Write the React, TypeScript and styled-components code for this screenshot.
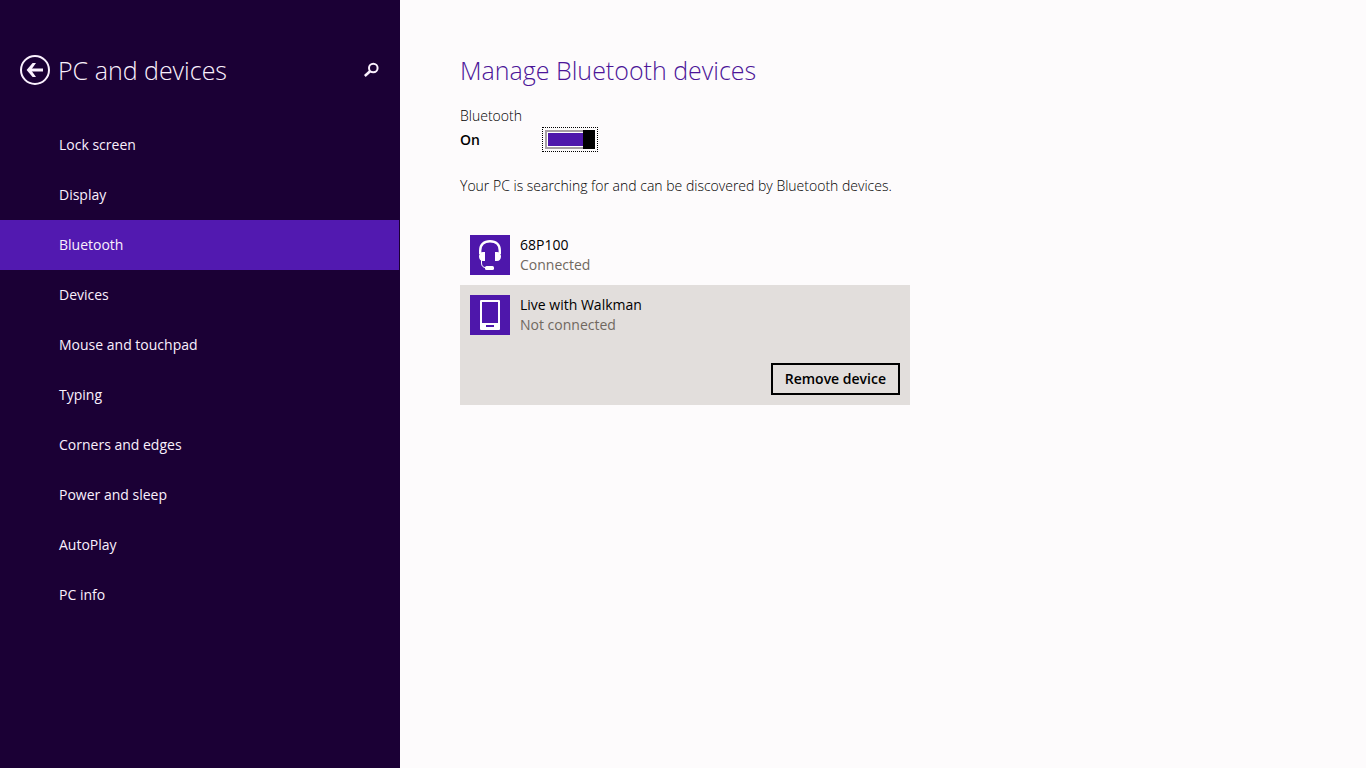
import React, { useState } from "react";
import styled, { createGlobalStyle } from "styled-components";

const GlobalStyle = createGlobalStyle`
  *, *::before, *::after { box-sizing: border-box; }
  body {
    margin: 0;
    background: #fdfbfc;
    color: #000;
    font: 14px/20px "Open Sans", "Noto Sans", sans-serif;
  }
  button, input { font: inherit; color: inherit; }
`;

const Page = styled.div`
  display: flex;
  min-height: 100vh;
`;

const Sidebar = styled.aside`
  flex: 0 0 400px;
  background: #1b0035;
  color: #faf0fd;
`;

const SidebarHeader = styled.header`
  display: flex;
  align-items: center;
  height: 40px;
  margin: 50px 20px 30px;
`;

const IconButton = styled.button`
  display: flex;
  padding: 0;
  border: 0;
  background: none;
  cursor: pointer;
`;

const SidebarTitle = styled.h1`
  flex: 1;
  margin: 0 0 0 8px;
  font-size: 25px;
  line-height: 40px;
  font-weight: 300;
`;

const NavList = styled.ul`
  margin: 0;
  padding: 0;
  list-style: none;
`;

const NavLink = styled.a<{ $active: boolean }>`
  display: block;
  margin-right: 1px;
  padding: 0 59px;
  line-height: 50px;
  color: inherit;
  text-decoration: none;
  background: ${(p) => (p.$active ? "#5219b0" : "transparent")};
`;

const Content = styled.main`
  flex: 1;
  padding: 50px 60px;
`;

const Title = styled.h2`
  margin: 0 0 16px;
  font-size: 25px;
  line-height: 40px;
  font-weight: 300;
  color: #4c1598;
`;

const SwitchLabel = styled.label`
  display: block;
  font-weight: 300;
`;

const SwitchRow = styled.div`
  display: flex;
  align-items: center;
  height: 27px;
`;

const SwitchState = styled.span`
  width: 85px;
  font-weight: 600;
`;

const Switch = styled.input`
  appearance: none;
  display: flex;
  width: 50px;
  height: 19px;
  margin: 0;
  padding: 1px;
  border: 2px solid #a69fa3;
  background: #fff;
  outline: 1px dotted #000;
  outline-offset: 2px;

  &::before {
    content: "";
    flex: 1;
    background: #a69fa3;
  }
  &::after {
    content: "";
    width: 12px;
    margin: -3px 0 -3px -3px;
    background: #000;
  }
  &:checked::before {
    background: #4e17ab;
  }
  &:checked::after {
    margin: -3px -3px -3px 0;
  }
  &:not(:checked)::after {
    order: -1;
  }
`;

const Status = styled.p`
  margin: 23px 0 29px;
  font-weight: 300;
`;

const DeviceList = styled.ul`
  max-width: 450px;
  margin: 0;
  padding: 0;
  list-style: none;
`;

const Device = styled.li<{ $selected?: boolean }>`
  padding: 10px;
  background: ${(p) => (p.$selected ? "#e2dedc" : "transparent")};
`;

const DeviceSummary = styled.div`
  display: flex;
  gap: 10px;
`;

const DeviceTile = styled.svg`
  width: 40px;
  height: 40px;
  background: #4e17ab;
`;

const DeviceName = styled.div``;

const DeviceState = styled.div`
  color: #706860;
`;

const DeviceActions = styled.div`
  display: flex;
  justify-content: flex-end;
  margin-top: 28px;
`;

const ActionButton = styled.button`
  height: 32px;
  padding: 0 12px;
  border: 2px solid #000;
  background: transparent;
  font-weight: 600;
  cursor: pointer;
`;

const BackIcon = () => (
  <svg width="30" height="30" viewBox="0 0 30 30" fill="none" stroke="#faf0fd" aria-hidden="true">
    <circle cx="15" cy="15" r="14" strokeWidth="2" />
    <path d="M9 15H23" strokeWidth="3" />
    <path d="M16 8H12.600L6.600 15L12.600 22H16L11 15Z" fill="#faf0fd" stroke="none" />
  </svg>
);

const SearchIcon = () => (
  <svg width="16" height="16" viewBox="0 0 16 16" fill="none" stroke="#faf0fd" aria-hidden="true">
    <circle cx="9.300" cy="6" r="4.300" strokeWidth="2" />
    <path d="M6.300 9L0.800 14" strokeWidth="2.600" />
  </svg>
);

const HeadsetTile = () => (
  <DeviceTile viewBox="0 0 40 40" fill="none" stroke="#fff" aria-hidden="true">
    <path d="M10.200 19V15.500C10.200 9.500 14 6.200 20 6.200S29.800 9.500 29.800 15.500V19" strokeWidth="2.400" />
    <path d="M15 17V26H13C10.500 26 9 24 9 21.500S10.500 17 13 17ZM25 17V26H27C29.500 26 31 24 31 21.500S29.500 17 27 17Z" fill="#fff" stroke="none" />
    <path d="M11.500 24V28C11.500 31 13 32.500 16 32.700" strokeWidth="1" />
    <rect x="15" y="31" width="9" height="4" rx="1.500" fill="#fff" stroke="none" />
  </DeviceTile>
);

const PhoneTile = () => (
  <DeviceTile viewBox="0 0 40 40" aria-hidden="true">
    <rect x="10" y="5" width="20" height="30" rx="1" fill="#fff" />
    <path d="M12 7H28V28H12ZM16 30H24V32H16Z" fill="#4e17ab" />
  </DeviceTile>
);

const sections = [
  "Lock screen",
  "Display",
  "Bluetooth",
  "Devices",
  "Mouse and touchpad",
  "Typing",
  "Corners and edges",
  "Power and sleep",
  "AutoPlay",
  "PC info",
];

export default function App() {
  const [on, setOn] = useState(true);
  return (
    <Page>
      <GlobalStyle />
      <Sidebar>
        <SidebarHeader>
          <IconButton type="button" aria-label="Back">
            <BackIcon />
          </IconButton>
          <SidebarTitle>PC and devices</SidebarTitle>
          <IconButton type="button" aria-label="Search">
            <SearchIcon />
          </IconButton>
        </SidebarHeader>
        <nav>
          <NavList>
            {sections.map((name) => (
              <li key={name}>
                <NavLink
                  href="#"
                  $active={name === "Bluetooth"}
                  aria-current={name === "Bluetooth" ? "page" : undefined}
                >
                  {name}
                </NavLink>
              </li>
            ))}
          </NavList>
        </nav>
      </Sidebar>
      <Content>
        <Title>Manage Bluetooth devices</Title>
        <SwitchLabel htmlFor="bluetooth">Bluetooth</SwitchLabel>
        <SwitchRow>
          <SwitchState>{on ? "On" : "Off"}</SwitchState>
          <Switch
            id="bluetooth"
            type="checkbox"
            role="switch"
            checked={on}
            onChange={(e) => setOn(e.target.checked)}
          />
        </SwitchRow>
        <Status>Your PC is searching for and can be discovered by Bluetooth devices.</Status>
        <DeviceList>
          <Device>
            <DeviceSummary>
              <HeadsetTile />
              <div>
                <DeviceName>68P100</DeviceName>
                <DeviceState>Connected</DeviceState>
              </div>
            </DeviceSummary>
          </Device>
          <Device $selected>
            <DeviceSummary>
              <PhoneTile />
              <div>
                <DeviceName>Live with Walkman</DeviceName>
                <DeviceState>Not connected</DeviceState>
              </div>
            </DeviceSummary>
            <DeviceActions>
              <ActionButton type="button">Remove device</ActionButton>
            </DeviceActions>
          </Device>
        </DeviceList>
      </Content>
    </Page>
  );
}
